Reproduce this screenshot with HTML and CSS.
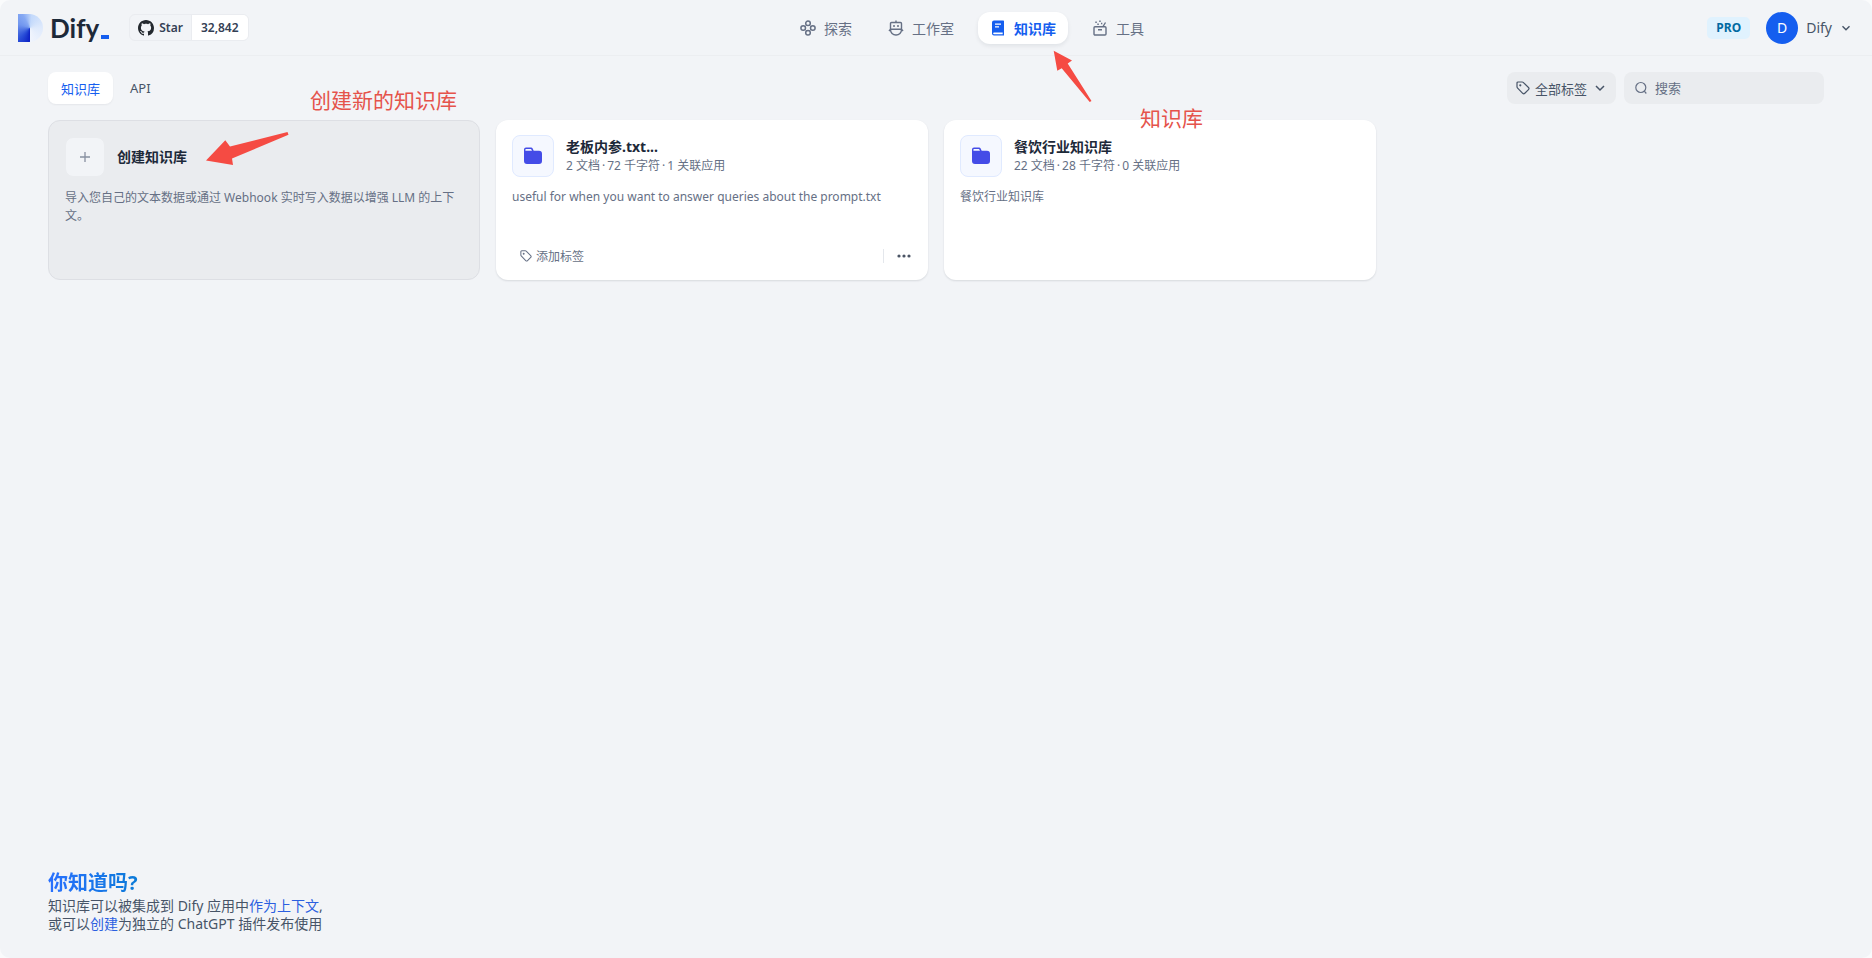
FILE: index.html
```html
<!DOCTYPE html>
<html lang="zh-CN">
<head>
<meta charset="utf-8">
<title>知识库 - Dify</title>
<link rel="stylesheet" href="styles.css">
</head>
<body>
<div class="page">
    <header class="header">
        <div class="header-left">
            <a class="logo" href="#">
                <span class="logo-mark"></span>
                <span class="logo-name">Dify</span>
                <span class="logo-dash"></span>
            </a>
            <a class="github" href="#">
                <span class="github-star">
                    <svg width="16" height="16" viewBox="0 0 16 16" fill="#24292f"><path d="M8 0C3.58 0 0 3.58 0 8c0 3.54 2.29 6.53 5.47 7.59.4.07.55-.17.55-.38 0-.19-.01-.82-.01-1.49-2.01.37-2.53-.49-2.69-.94-.09-.23-.48-.94-.82-1.13-.28-.15-.68-.52-.01-.53.63-.01 1.08.58 1.23.82.72 1.21 1.87.87 2.33.66.07-.52.28-.87.51-1.07-1.78-.2-3.64-.89-3.64-3.95 0-.87.31-1.59.82-2.15-.08-.2-.36-1.02.08-2.12 0 0 .67-.21 2.2.82.64-.18 1.32-.27 2-.27s1.36.09 2 .27c1.53-1.04 2.2-.82 2.2-.82.44 1.1.16 1.92.08 2.12.51.56.82 1.27.82 2.15 0 3.07-1.87 3.75-3.65 3.95.29.25.54.73.54 1.48 0 1.07-.01 1.93-.01 2.2 0 .21.15.46.55.38A8.01 8.01 0 0 0 16 8c0-4.42-3.58-8-8-8z"/></svg>
                    Star
                </span>
                <span class="github-count">32,842</span>
            </a>
        </div>
        <nav class="nav">
            <a class="nav-item" href="#">
                <svg width="16" height="16" viewBox="0 0 16 16" fill="none" stroke="currentColor" stroke-width="1.5"><circle cx="8" cy="3.3" r="2.3"/><circle cx="8" cy="12.7" r="2.3"/><circle cx="3.200" cy="8" r="2.3"/><circle cx="12.800" cy="8" r="2.3"/><path d="M6.500 5.200L5.100 6.600M9.500 5.200l1.400 1.400M6.500 10.800L5.100 9.400M9.500 10.800l1.400-1.400" stroke-width="1"/></svg>
                探索
            </a>
            <a class="nav-item" href="#">
                <svg width="16" height="16" viewBox="0 0 16 16" fill="none" stroke="currentColor" stroke-width="1.4"><path d="M8 .5v2M3.500 2.500h9a1 1 0 0 1 1 1v5.700h-11V3.500a1 1 0 0 1 1-1zM2.500 9.200v.5A5.300 5.300 0 0 0 7.800 15h.4a5.300 5.300 0 0 0 5.300-5.300v-.5M1 11l1.500-1.800M15 11l-1.500-1.800"/><path d="M6 5v2M10 5v2" stroke-width="1.500"/></svg>
                工作室
            </a>
            <div class="nav-current">
                <a class="nav-item active" href="#">
                    <svg width="16" height="16" viewBox="0 0 16 16"><path fill="currentColor" fill-rule="evenodd" d="M4 .5h9.300a.7.7 0 0 1 .7.7v14.300H4a2 2 0 0 1-2-2v-11a2 2 0 0 1 2-2zM4 12.500a.8.8 0 0 0 0 1.700h8.700v-1.700zM5 3.500v1.200h6V3.500zM5 6.200v1.200h4V6.200z"/></svg>
                    知识库
                </a>
                <svg class="arrow arrow-nav" width="40" height="54" viewBox="0 0 40 54"><path fill="#f54b43" d="M0.700 0.700 L19 10.500 L14.700 13.500 L38.500 51 L36.700 52 L8.700 18.300 L4.300 20.700Z"/></svg>
                <span class="note note-nav">知识库</span>
            </div>
            <a class="nav-item" href="#">
                <svg width="16" height="16" viewBox="0 0 16 16" fill="none" stroke="currentColor" stroke-width="1.400"><rect x="2" y="6.700" width="12" height="8.300" rx="1"/><path d="M6 9.700h4M11 6.500l2.500-4"/><path d="M3.300 2.300h1.500M7.200 1.200h1.500M5.300 4.300h1.500M9 3.500h1.300" stroke-width="1.500"/></svg>
                工具
            </a>
        </nav>
        <div class="header-right">
            <span class="plan">PRO</span>
            <button class="account" type="button">
                <span class="avatar">D</span>
                Dify
                <svg width="12" height="12" viewBox="0 0 12 12" fill="none" stroke="currentColor" stroke-width="1.400"><path d="M2.500 4.200L6 7.700l3.500-3.500"/></svg>
            </button>
        </div>
    </header>

    <div class="toolbar">
        <div class="tabs">
            <button class="tab active" type="button">知识库</button>
            <button class="tab" type="button">API</button>
        </div>
        <div class="filters">
            <button class="tag-filter" type="button">
                <svg width="14" height="14" viewBox="0 0 14 14" fill="none" stroke="currentColor" stroke-width="1.200" stroke-linejoin="round"><path d="M1 2v3.800a1.500 1.500 0 0 0 .4 1l5.300 5.500a1.500 1.500 0 0 0 2.100 0l3.700-3.700a1.500 1.500 0 0 0 0-2.100L7.200 1.400a1.500 1.500 0 0 0-1-.4H2a1 1 0 0 0-1 1z"/><circle cx="4.300" cy="4.300" r=".5"/></svg>
                全部标签
                <svg class="chevron" width="12" height="12" viewBox="0 0 12 12" fill="none" stroke="currentColor" stroke-width="1.500"><path d="M2 4l4 4 4-4"/></svg>
            </button>
            <label class="search">
                <svg width="14" height="14" viewBox="0 0 14 14" fill="none" stroke="currentColor" stroke-width="1.200"><circle cx="6.800" cy="6.500" r="5"/><path d="M10.300 10.200l2 2.300"/></svg>
                <input type="text" placeholder="搜索" aria-label="搜索">
            </label>
        </div>
    </div>

    <main class="cards">
        <div class="card create">
            <a class="card-head" href="#">
                <span class="plus"><svg width="12" height="12" viewBox="0 0 12 12" stroke="#8790a0" stroke-width="1.300"><path d="M6 1v10M1 6h10"/></svg></span>
                <span class="card-title">创建知识库</span>
            </a>
            <p class="card-text">导入您自己的文本数据或通过 Webhook 实时写入数据以增强 LLM 的上下文。</p>
            <svg class="arrow arrow-create" width="84" height="36" viewBox="0 0 84 36"><path fill="#f54b43" d="M1 29.500 L20.300 9.300 L25 15.500 L82.500 1 L83.500 3.700 L27 27.500 L28 34Z"/></svg>
            <span class="note note-create">创建新的知识库</span>
        </div>

        <div class="card">
            <a class="card-head" href="#">
                <span class="folder"><svg width="20" height="20" viewBox="0 0 20 20"><path fill="#444ce7" fill-rule="evenodd" d="M3 1.500h5.200a1.500 1.500 0 0 1 1.300.8L10.700 4.700H16a3 3 0 0 1 3 3v7.300a3 3 0 0 1-3 3H4a3 3 0 0 1-3-3V3.500a2 2 0 0 1 2-2zM3 3a.6.6 0 0 0-.6.6v1.100H9L8.200 3.200a.5.5 0 0 0-.4-.2z"/></svg></span>
                <span class="card-info">
                    <span class="card-title">老板内参.txt...</span>
                    <span class="card-meta">2 文档<i>·</i>72 千字符<i>·</i>1 关联应用</span>
                </span>
            </a>
            <p class="card-text">useful for when you want to answer queries about the prompt.txt</p>
            <div class="card-foot">
                <button class="add-tag" type="button">
                    <svg width="12" height="12" viewBox="0 0 14 14" fill="none" stroke="currentColor" stroke-width="1.200" stroke-linejoin="round"><path d="M1 2v3.800a1.500 1.500 0 0 0 .4 1l5.300 5.500a1.500 1.500 0 0 0 2.100 0l3.700-3.700a1.500 1.500 0 0 0 0-2.100L7.200 1.400a1.500 1.500 0 0 0-1-.4H2a1 1 0 0 0-1 1z"/><circle cx="4.300" cy="4.300" r=".5"/></svg>
                    添加标签
                </button>
                <span class="divider"></span>
                <button class="more" type="button" aria-label="更多">
                    <svg width="14" height="14" viewBox="0 0 14 14" fill="#4b5565"><circle cx="2" cy="7" r="1.600"/><circle cx="7" cy="7" r="1.600"/><circle cx="12" cy="7" r="1.600"/></svg>
                </button>
            </div>
        </div>

        <div class="card">
            <a class="card-head" href="#">
                <span class="folder"><svg width="20" height="20" viewBox="0 0 20 20"><path fill="#444ce7" fill-rule="evenodd" d="M3 1.500h5.200a1.500 1.500 0 0 1 1.300.8L10.700 4.700H16a3 3 0 0 1 3 3v7.300a3 3 0 0 1-3 3H4a3 3 0 0 1-3-3V3.500a2 2 0 0 1 2-2zM3 3a.6.6 0 0 0-.6.6v1.100H9L8.200 3.200a.5.5 0 0 0-.4-.2z"/></svg></span>
                <span class="card-info">
                    <span class="card-title">餐饮行业知识库</span>
                    <span class="card-meta">22 文档<i>·</i>28 千字符<i>·</i>0 关联应用</span>
                </span>
            </a>
            <p class="card-text">餐饮行业知识库</p>
        </div>
    </main>

    <footer class="footer">
        <h3>你知道吗?</h3>
        <p>知识库可以被集成到 Dify 应用中<a href="#">作为上下文</a>,<br>或可以<a href="#">创建</a>为独立的 ChatGPT 插件发布使用</p>
    </footer>
</div>
</body>
</html>
```
FILE: styles.css
```css
* {
    box-sizing: border-box;
}
body {
    margin: 0;
    background: #fafbfc;
    font-family: "Noto Sans", "Noto Sans CJK SC", sans-serif;
    font-size: 14px;
    color: #1d2939;
}
a {
    color: inherit;
    text-decoration: none;
}
button {
    border: 0;
    padding: 0;
    background: none;
    font-family: inherit;
    color: inherit;
    cursor: pointer;
}
svg {
    flex-shrink: 0;
}
.page {
    display: flex;
    flex-direction: column;
    min-height: 100vh;
    background: #f2f4f7;
    border-radius: 10px;
}

/* header */
.header {
    display: flex;
    align-items: center;
    justify-content: space-between;
    height: 56px;
    padding: 0 20px 0 18px;
    border-bottom: 1px solid #eceef1;
}
.header-left, .header-right, .nav {
    display: flex;
    align-items: center;
}
.header-left {
    gap: 20px;
}
.logo {
    display: flex;
    align-items: center;
}
.logo-mark {
    width: 25px;
    height: 28px;
    margin-right: 7px;
    border-radius: 0 14px 14px 0;
    background: conic-gradient(from 180deg at 12px 14px, #0a1fc4, #2a4fd8 12%, #7196ee 30%, #86a9f3 42%, #c3d9fb 52%, #dfeafc 75%, #f0f4fd 99%);
}
.logo-name {
    font-family: Lato, sans-serif;
    font-size: 26px;
    line-height: 28px;
    font-weight: bold;
}
.logo-dash {
    align-self: flex-end;
    width: 8px;
    height: 4px;
    margin: 0 0 3px 2px;
    background: #155eef;
}
.github {
    display: flex;
    border: 1px solid #eaecf0;
    border-radius: 6px;
    overflow: hidden;
    font-size: 12px;
    line-height: 25px;
    font-weight: 600;
    color: #344054;
}
.github-star {
    display: flex;
    align-items: center;
    gap: 5px;
    padding: 0 8px;
    border-right: 1px solid #eaecf0;
}
.github-count {
    padding: 0 9px;
    background: #fff;
}
.nav {
    gap: 12px;
}
.nav-item {
    display: flex;
    align-items: center;
    gap: 8px;
    height: 32px;
    padding: 0 12px;
    border-radius: 12px;
    color: #667085;
}
.nav-item.active {
    background: #fff;
    box-shadow: 0 2px 4px rgba(16, 24, 40, .08);
    color: #155eef;
    font-weight: bold;
}
.nav-current {
    position: relative;
}
.header-right {
    gap: 16px;
    padding-left: 12px;
}
.plan {
    padding: 0 9px;
    border-radius: 5px;
    background: #e0f2fe;
    font-size: 12px;
    line-height: 22px;
    font-weight: bold;
    color: #026aa2;
}
.account {
    display: flex;
    align-items: center;
    gap: 8px;
    font-size: 14px;
    color: #475467;
}
.avatar {
    width: 32px;
    border-radius: 50%;
    background: #155eef;
    line-height: 32px;
    color: #fff;
}

/* tabs and filters */
.toolbar {
    display: flex;
    justify-content: space-between;
    padding: 16px 48px;
}
.tabs {
    display: flex;
    gap: 4px;
}
.tab {
    height: 32px;
    padding: 0 13px;
    border-radius: 8px;
    font-size: 13px;
    color: #475467;
}
.tab.active {
    background: #fff;
    box-shadow: 0 1px 2px rgba(16, 24, 40, .06);
    color: #155eef;
}
.filters {
    display: flex;
    gap: 8px;
}
.tag-filter, .search {
    display: flex;
    align-items: center;
    height: 32px;
    border-radius: 8px;
    background: #eaecef;
    font-size: 13px;
    color: #475467;
}
.tag-filter {
    gap: 5px;
    padding: 0 10px 0 9px;
}
.chevron {
    margin-left: 2px;
}
.search {
    gap: 7px;
    width: 200px;
    padding: 0 10px;
    color: #667085;
}
.search input {
    flex: 1;
    min-width: 0;
    border: 0;
    padding: 0;
    background: none;
    outline: none;
    font-family: inherit;
    font-size: 13px;
}
.search input::placeholder {
    color: #667085;
}

/* cards */
.cards {
    flex: 1;
    display: grid;
    grid-template-columns: repeat(4, 1fr);
    gap: 16px;
    align-content: start;
    padding: 0 48px;
}
.card {
    position: relative;
    display: flex;
    flex-direction: column;
    min-height: 160px;
    padding: 15px 16px 8px;
    border-radius: 12px;
    background: #fff;
    box-shadow: 0 1px 2px rgba(16, 24, 40, .12);
}
.create {
    padding: 15px 16px;
    border: 1px solid #dddfe4;
    background: #eaecef;
    box-shadow: none;
}
.card-head {
    display: flex;
    align-items: center;
    gap: 12px;
    height: 42px;
    margin-bottom: 11px;
}
.plus, .folder {
    display: flex;
    align-items: center;
    justify-content: center;
    border-radius: 8px;
}
.plus {
    width: 40px;
    height: 40px;
    border: 1px solid #eaecef;
    background: #f2f4f7;
}
.folder {
    width: 42px;
    height: 42px;
    border: 1px solid #e0eaff;
    background: #f5f8ff;
}
.card-info {
    display: flex;
    flex-direction: column;
}
.card-title {
    font-size: 14px;
    line-height: 20px;
    font-weight: bold;
}
.card-meta {
    font-size: 12px;
    line-height: 18px;
    color: #667085;
}
.card-meta i {
    margin: 0 2px;
    font-style: normal;
}
.card-text {
    margin: 0;
    font-size: 12px;
    line-height: 18px;
    color: #667085;
}
.card-foot {
    display: flex;
    align-items: center;
    height: 32px;
    margin-top: auto;
}
.add-tag {
    display: flex;
    align-items: center;
    gap: 4px;
    padding: 0 8px;
    font-size: 12px;
    color: #667085;
}
.divider {
    width: 1px;
    height: 14px;
    margin-left: auto;
    background: #e4e7ec;
}
.more {
    display: flex;
    padding: 8px 1px 8px 13px;
}

/* red arrows and their notes */
.arrow, .note {
    position: absolute;
    z-index: 1;
}
.note {
    font-size: 21px;
    line-height: 28px;
    white-space: nowrap;
    color: #e5534b;
}
.arrow-nav {
    left: 75px;
    top: 38px;
}
.note-nav {
    left: 162px;
    top: 92px;
}
.arrow-create {
    left: 156px;
    top: 10px;
}
.note-create {
    left: 261px;
    top: -35px;
}

/* footer */
.footer {
    padding: 24px 48px 25px;
}
.footer h3 {
    width: max-content;
    margin: 0;
    background: linear-gradient(90deg, #2970ff, #0b7bd8);
    background-clip: text;
    -webkit-background-clip: text;
    font-size: 20px;
    line-height: 28px;
    color: transparent;
}
.footer p {
    margin: 0;
    font-size: 14px;
    line-height: 18px;
    color: #475467;
}
.footer a {
    color: #2b5fe0;
}
```
